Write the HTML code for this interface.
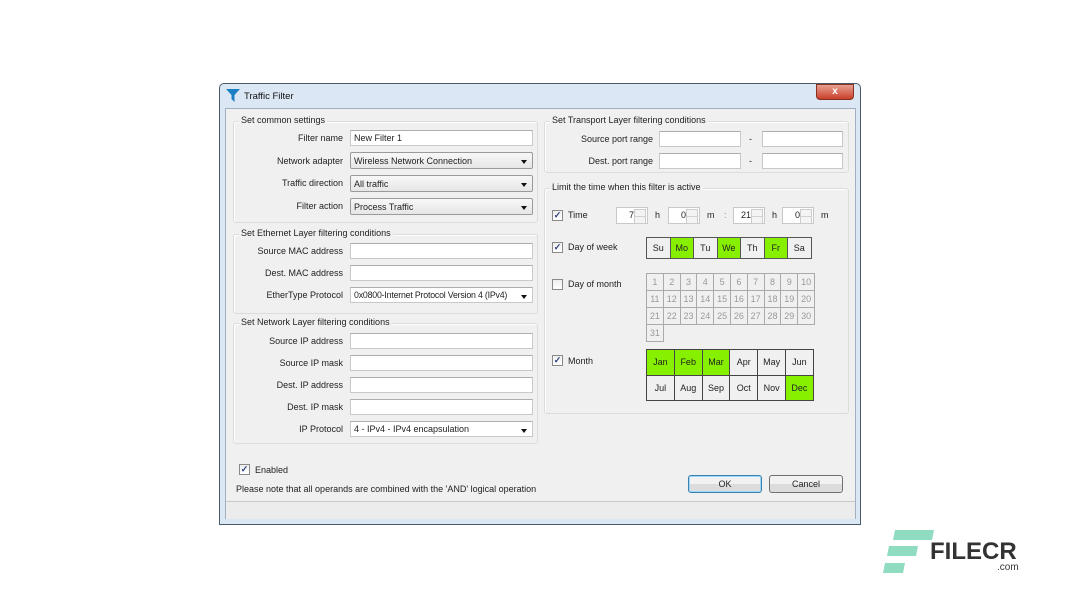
<!DOCTYPE html>
<html><head><meta charset="utf-8"><style>
*{box-sizing:border-box;margin:0;padding:0}
body{width:1080px;height:608px;background:#fff;position:relative;overflow:hidden;font-family:"Liberation Sans",sans-serif;font-size:9px;color:#222}
.a{position:absolute}
.win{left:219px;top:83px;width:642px;height:442px;border:1px solid #4a5a6a;background:#dbe7f4;border-radius:5px 5px 0 0}
.client{left:225px;top:108px;width:631px;height:411px;background:#f0f0f0;border:1px solid #a0b0c0}
.grp{border:1px solid #dcdcdc;border-radius:3px;box-shadow:inset 1px 1px 0 #fff}
.gt{background:#f0f0f0;padding:0 2px}
.lbl{text-align:right;white-space:nowrap}
.in{background:#fff;border:1px solid #c8c8c8;border-top-color:#abadb3;height:16px;padding:2px 3px;white-space:nowrap}
.cb{background:linear-gradient(#f8f8f8,#e6e6e6);border:1px solid #9a9a9a;height:17px;padding:3px 3px;border-radius:2px;white-space:nowrap}
.cb:after,.dd:after{content:"";position:absolute;right:5px;top:7px;border:3.5px solid transparent;border-top:4px solid #111}
.chk{width:11px;height:11px;border:1px solid #8a8a8a;background:linear-gradient(#eee,#fff);font-size:9px;line-height:9px;text-align:center;color:#2a3c80;font-weight:bold}
table{border-collapse:collapse;position:absolute}
td{text-align:center;padding:0}
.dw td{border:1px solid #555;width:23.5px;height:21px;background:#f0f0f0}
.dm td{border:1px solid #aaa;width:16.8px;height:17px;color:#999}
.mo td{border:1px solid #444;width:27.8px;height:25.5px;background:#f0f0f0}
.g{background:#86f000!important}
.sp{background:#fff;border:1px solid #c8c8c8;height:17px;width:32px;text-align:right;padding:2px 13px 0 0}
.sp:after{content:"";position:absolute;right:1px;top:1px;width:10px;height:13px;border:1px solid #ccc;background:linear-gradient(#f4f4f4 45%,#bbb 50%,#f4f4f4 55%)}
.btn{border:1px solid #707070;border-radius:3px;background:linear-gradient(#f2f2f2 50%,#dcdcdc 50%);text-align:center;padding-top:3px;height:18px}
</style></head><body>
<div class="a win"></div>
<svg class="a" style="left:226px;top:89px" width="14" height="13" viewBox="0 0 14 13"><path d="M0 0H14L8.5 6V13L5.5 10V6Z" fill="#1b7fc4"/></svg>
<div class="a" style="left:244px;top:91px;font-size:9.5px;color:#111">Traffic Filter</div>
<div class="a" style="left:816px;top:84px;width:38px;height:16px;border-radius:0 0 4px 4px;background:linear-gradient(#e8a090,#c8402c);border:1px solid #8a3020;color:#fff;font-weight:bold;font-size:10px;text-align:center;line-height:14px">x</div>
<div class="a client"></div>
<div class="a" style="left:226px;top:501px;width:629px;height:1px;background:#c8c8c8"></div>
<div class="a" style="left:226px;top:502px;width:629px;height:17px;background:#ececec"></div>

<div class="a grp" style="left:233px;top:121px;width:305px;height:102px"></div>
<div class="a gt" style="left:239px;top:115px">Set common settings</div>
<div class="a lbl" style="left:240px;top:133px;width:103px">Filter name</div>
<div class="a in" style="left:350px;top:130px;width:183px">New Filter 1</div>
<div class="a lbl" style="left:240px;top:156px;width:103px">Network adapter</div>
<div class="a cb" style="left:350px;top:152px;width:183px">Wireless Network Connection</div>
<div class="a lbl" style="left:240px;top:178px;width:103px">Traffic direction</div>
<div class="a cb" style="left:350px;top:175px;width:183px">All traffic</div>
<div class="a lbl" style="left:240px;top:201px;width:103px">Filter action</div>
<div class="a cb" style="left:350px;top:198px;width:183px">Process Traffic</div>

<div class="a grp" style="left:233px;top:234px;width:305px;height:80px"></div>
<div class="a gt" style="left:239px;top:228px">Set Ethernet Layer filtering conditions</div>
<div class="a lbl" style="left:240px;top:246px;width:103px">Source MAC address</div>
<div class="a in" style="left:350px;top:243px;width:183px"></div>
<div class="a lbl" style="left:240px;top:268px;width:103px">Dest. MAC address</div>
<div class="a in" style="left:350px;top:265px;width:183px"></div>
<div class="a lbl" style="left:240px;top:290px;width:103px">EtherType Protocol</div>
<div class="a in dd" style="left:350px;top:287px;width:183px;padding-right:14px;font-size:8.8px;letter-spacing:-0.2px">0x0800-Internet Protocol Version 4 (IPv4)</div>

<div class="a grp" style="left:233px;top:323px;width:305px;height:121px"></div>
<div class="a gt" style="left:239px;top:317px">Set Network Layer filtering conditions</div>
<div class="a lbl" style="left:240px;top:336px;width:103px">Source IP address</div>
<div class="a in" style="left:350px;top:333px;width:183px"></div>
<div class="a lbl" style="left:240px;top:358px;width:103px">Source IP mask</div>
<div class="a in" style="left:350px;top:355px;width:183px"></div>
<div class="a lbl" style="left:240px;top:380px;width:103px">Dest. IP address</div>
<div class="a in" style="left:350px;top:377px;width:183px"></div>
<div class="a lbl" style="left:240px;top:402px;width:103px">Dest. IP mask</div>
<div class="a in" style="left:350px;top:399px;width:183px"></div>
<div class="a lbl" style="left:240px;top:424px;width:103px">IP Protocol</div>
<div class="a in dd" style="left:350px;top:421px;width:183px">4 - IPv4 - IPv4 encapsulation</div>

<div class="a chk" style="left:239px;top:464px">✓</div>
<div class="a" style="left:255px;top:465px">Enabled</div>
<div class="a" style="left:236px;top:484px">Please note that all operands are combined with the 'AND' logical operation</div>

<div class="a grp" style="left:544px;top:121px;width:305px;height:52px"></div>
<div class="a gt" style="left:550px;top:115px">Set Transport Layer filtering conditions</div>
<div class="a lbl" style="left:560px;top:134px;width:93px">Source port range</div>
<div class="a in" style="left:659px;top:131px;width:82px"></div>
<div class="a" style="left:749px;top:134px">-</div>
<div class="a in" style="left:762px;top:131px;width:81px"></div>
<div class="a lbl" style="left:560px;top:156px;width:93px">Dest. port range</div>
<div class="a in" style="left:659px;top:153px;width:82px"></div>
<div class="a" style="left:749px;top:156px">-</div>
<div class="a in" style="left:762px;top:153px;width:81px"></div>

<div class="a grp" style="left:544px;top:188px;width:305px;height:226px"></div>
<div class="a gt" style="left:550px;top:182px">Limit the time when this filter is active</div>
<div class="a chk" style="left:552px;top:210px">✓</div>
<div class="a" style="left:568px;top:210px">Time</div>
<div class="a sp" style="left:616px;top:207px">7</div><div class="a" style="left:655px;top:210px">h</div>
<div class="a sp" style="left:668px;top:207px">0</div><div class="a" style="left:707px;top:210px">m</div>
<div class="a" style="left:724px;top:210px;color:#888">:</div>
<div class="a sp" style="left:733px;top:207px">21</div><div class="a" style="left:772px;top:210px">h</div>
<div class="a sp" style="left:782px;top:207px">0</div><div class="a" style="left:821px;top:210px">m</div>

<div class="a chk" style="left:552px;top:242px">✓</div>
<div class="a" style="left:568px;top:242px">Day of week</div>
<table class="dw" style="left:646px;top:237px"><tr><td>Su</td><td class="g">Mo</td><td>Tu</td><td class="g">We</td><td>Th</td><td class="g">Fr</td><td>Sa</td></tr></table>

<div class="a chk" style="left:552px;top:279px"></div>
<div class="a" style="left:568px;top:279px">Day of month</div>
<table class="dm" style="left:646px;top:273px">
<tr><td>1</td><td>2</td><td>3</td><td>4</td><td>5</td><td>6</td><td>7</td><td>8</td><td>9</td><td>10</td></tr>
<tr><td>11</td><td>12</td><td>13</td><td>14</td><td>15</td><td>16</td><td>17</td><td>18</td><td>19</td><td>20</td></tr>
<tr><td>21</td><td>22</td><td>23</td><td>24</td><td>25</td><td>26</td><td>27</td><td>28</td><td>29</td><td>30</td></tr>
<tr><td>31</td></tr></table>

<div class="a chk" style="left:552px;top:355px">✓</div>
<div class="a" style="left:568px;top:356px">Month</div>
<table class="mo" style="left:646px;top:349px">
<tr><td class="g">Jan</td><td class="g">Feb</td><td class="g">Mar</td><td>Apr</td><td>May</td><td>Jun</td></tr>
<tr><td>Jul</td><td>Aug</td><td>Sep</td><td>Oct</td><td>Nov</td><td class="g">Dec</td></tr></table>

<div class="a btn" style="left:688px;top:475px;width:74px;border-color:#3c7fb1;box-shadow:inset 0 0 0 1px #9cd8f8">OK</div>
<div class="a btn" style="left:769px;top:475px;width:74px">Cancel</div>

<svg class="a" style="left:883px;top:530px" width="52" height="46" viewBox="0 0 52 46"><g fill="#8fdcc0"><path d="M12 0H51L49 10H10Z"/><path d="M6 16H35L33 26H4Z"/><path d="M2 33H22L20 43H0Z"/></g></svg>
<div class="a" style="left:930px;top:538px;font-size:24px;font-weight:bold;color:#333">FILECR</div>
<div class="a" style="left:997px;top:562px;font-size:10px;color:#333">.com</div>
</body></html>
